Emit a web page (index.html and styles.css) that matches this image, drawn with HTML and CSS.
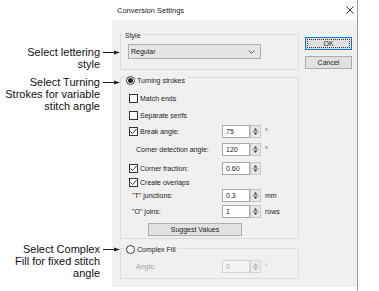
FILE: index.html
```html
<!DOCTYPE html>
<html lang="en">
<head>
    <meta charset="UTF-8">
    <meta name="viewport" content="width=device-width, initial-scale=1.0">
    <title>Conversion Settings</title>
    <link rel="stylesheet" href="styles.css">
</head>
<body>
    <div class="page">
        <div class="notes">
            <div class="note">
                <p>Select lettering<br>style</p>
                <svg class="arrow" width="17" height="5" viewBox="0 0 17 5"><path d="M0 2.5H13" stroke="#222"/><path d="M11 0.5L17 2.5L11 4.5Z" fill="#222"/></svg>
            </div>
            <div class="note note-turning">
                <p>Select Turning<br>Strokes for variable<br>stitch angle</p>
                <svg class="arrow" width="17" height="5" viewBox="0 0 17 5"><path d="M0 2.5H13" stroke="#222"/><path d="M11 0.5L17 2.5L11 4.5Z" fill="#222"/></svg>
            </div>
            <div class="note note-complex">
                <p>Select Complex<br>Fill for fixed stitch<br>angle</p>
                <svg class="arrow" width="17" height="5" viewBox="0 0 17 5"><path d="M0 2.5H13" stroke="#222"/><path d="M11 0.5L17 2.5L11 4.5Z" fill="#222"/></svg>
            </div>
        </div>

        <div class="dialog">
            <div class="titlebar">
                <span>Conversion Settings</span>
                <svg class="close" width="8" height="8" viewBox="0 0 8 8"><path d="M0.5 0.5L7.5 7.5M7.5 0.5L0.5 7.5" stroke="#333"/></svg>
            </div>
            <div class="dialog-body">
                <div class="groups">
                    <div class="group group-style">
                        <div class="legend">Style</div>
                        <div class="select">
                            <span>Regular</span>
                            <svg width="7" height="4" viewBox="0 0 7 4"><path d="M0.5 0.5L3.5 3.5L6.5 0.5" stroke="#666" fill="none"/></svg>
                        </div>
                    </div>

                    <div class="group group-turning">
                        <div class="legend"><span class="radio checked"></span>Turning strokes</div>
                        <div class="fields">
                            <div class="row"><span class="check"></span>Match ends</div>
                            <div class="row"><span class="check"></span>Separate serifs</div>
                            <div class="row">
                                <div class="label"><span class="check"><svg width="7" height="7" viewBox="0 0 7 7"><path d="M0.5 3.5L2.5 5.5L6.5 1" stroke="#333" fill="none"/></svg></span>Break angle:</div>
                                <div class="spin"><span class="spin-input">75</span><svg width="11" height="13" viewBox="0 0 11 13"><rect x="0.5" y="0.5" width="10" height="12" fill="#e6e6e6" stroke="#c8c8c8"/><path d="M3.5 5.5h4l-2-2.5z M3.5 7.5h4l-2 2.5z" fill="#444"/><path d="M2 6.5h7" stroke="#b0b0b0"/></svg></div>
                                <span class="unit">°</span>
                            </div>
                            <div class="row">
                                <div class="label indent">Corner detection angle:</div>
                                <div class="spin"><span class="spin-input">120</span><svg width="11" height="13" viewBox="0 0 11 13"><rect x="0.5" y="0.5" width="10" height="12" fill="#e6e6e6" stroke="#c8c8c8"/><path d="M3.5 5.5h4l-2-2.5z M3.5 7.5h4l-2 2.5z" fill="#444"/><path d="M2 6.5h7" stroke="#b0b0b0"/></svg></div>
                                <span class="unit">°</span>
                            </div>
                            <div class="row">
                                <div class="label"><span class="check"><svg width="7" height="7" viewBox="0 0 7 7"><path d="M0.5 3.5L2.5 5.5L6.5 1" stroke="#333" fill="none"/></svg></span>Corner fraction:</div>
                                <div class="spin"><span class="spin-input">0.60</span><svg width="11" height="13" viewBox="0 0 11 13"><rect x="0.5" y="0.5" width="10" height="12" fill="#e6e6e6" stroke="#c8c8c8"/><path d="M3.5 5.5h4l-2-2.5z M3.5 7.5h4l-2 2.5z" fill="#444"/><path d="M2 6.5h7" stroke="#b0b0b0"/></svg></div>
                            </div>
                            <div class="row"><span class="check"><svg width="7" height="7" viewBox="0 0 7 7"><path d="M0.5 3.5L2.5 5.5L6.5 1" stroke="#333" fill="none"/></svg></span>Create overlaps</div>
                            <div class="row">
                                <div class="label sub">"T" junctions:</div>
                                <div class="spin"><span class="spin-input">0.3</span><svg width="11" height="13" viewBox="0 0 11 13"><rect x="0.5" y="0.5" width="10" height="12" fill="#e6e6e6" stroke="#c8c8c8"/><path d="M3.5 5.5h4l-2-2.5z M3.5 7.5h4l-2 2.5z" fill="#444"/><path d="M2 6.5h7" stroke="#b0b0b0"/></svg></div>
                                <span class="unit">mm</span>
                            </div>
                            <div class="row">
                                <div class="label sub">"O" joins:</div>
                                <div class="spin"><span class="spin-input">1</span><svg width="11" height="13" viewBox="0 0 11 13"><rect x="0.5" y="0.5" width="10" height="12" fill="#e6e6e6" stroke="#c8c8c8"/><path d="M3.5 5.5h4l-2-2.5z M3.5 7.5h4l-2 2.5z" fill="#444"/><path d="M2 6.5h7" stroke="#b0b0b0"/></svg></div>
                                <span class="unit">rows</span>
                            </div>
                        </div>
                        <button class="btn btn-suggest">Suggest Values</button>
                    </div>

                    <div class="group group-complex">
                        <div class="legend"><span class="radio"></span>Complex Fill</div>
                        <div class="row row-angle disabled">
                            <div class="label indent">Angle:</div>
                            <div class="spin"><span class="spin-input">0</span><svg width="11" height="13" viewBox="0 0 11 13"><rect x="0.5" y="0.5" width="10" height="12" fill="#ececec" stroke="#d6d6d6"/><path d="M3.5 5.5h4l-2-2.5z M3.5 7.5h4l-2 2.5z" fill="#a8a8a8"/><path d="M2 6.5h7" stroke="#cfcfcf"/></svg></div>
                            <span class="unit">°</span>
                        </div>
                    </div>
                </div>

                <div class="buttons">
                    <button class="btn btn-default">OK</button>
                    <button class="btn">Cancel</button>
                </div>
            </div>
        </div>
    </div>
</body>
</html>
```

FILE: styles.css
```css
* {
    box-sizing: border-box;
}
body {
    margin: 0;
    background-color: #fff;
    font-family: "Liberation Sans", Arial, sans-serif;
}
.page {
    display: flex;
    width: 379px;
    height: 291px;
    overflow: hidden;
}

/* callouts on the left */
.notes {
    width: 112px;
    flex: none;
    padding-top: 46px;
    position: relative;
    z-index: 1;
}
.note {
    display: flex;
    align-items: flex-start;
    width: 120px;
}
.note p {
    margin: 0;
    width: 100px;
    text-align: right;
    font-size: 11px;
    line-height: 12px;
    color: #111;
}
.note .arrow {
    flex: none;
    margin: 4px 0 0 3px;
}
.note-turning {
    margin-top: 6px;
}
.note-complex {
    margin-top: 131px;
}

/* dialog */
.dialog {
    width: 246px;
    flex: none;
    border-right: 1px solid #9c9c9c;
    font-size: 7px;
    color: #222;
}
.titlebar {
    height: 20px;
    display: flex;
    align-items: center;
    justify-content: space-between;
    padding: 0 3px 0 5px;
    font-size: 7.5px;
    background-color: #fff;
}
.dialog-body {
    height: 267px;
    background-color: #f0f0f0;
    padding: 14px 0 0 8px;
    display: flex;
}
.groups {
    width: 179px;
    flex: none;
}
.group {
    border: 1px solid #dcdcdc;
}
.legend {
    display: flex;
    align-items: center;
    width: fit-content;
    height: 10px;
    padding: 0 2px;
    margin-left: 2px;
    background-color: #f0f0f0;
}
.group-style {
    height: 36px;
}
.group-style .legend {
    margin-top: -5px;
}
.select {
    width: 133px;
    height: 15px;
    margin: 4px 0 0 7px;
    padding: 0 5px 0 2px;
    display: flex;
    align-items: center;
    justify-content: space-between;
    background-color: #e5e5e5;
    border: 1px solid #adadad;
}

.group-turning {
    height: 162px;
    margin-top: 7px;
}
.group-turning .legend {
    margin-top: -3px;
    margin-left: 3px;
}
.fields {
    display: grid;
    grid-template-rows: 17px 16px 17px 19px 18px 11px 14px 19px;
    margin-top: 5px;
    padding-left: 8px;
}
.row {
    display: flex;
    align-items: center;
}
.label {
    width: 93px;
    flex: none;
    display: flex;
    align-items: center;
}
.label.indent {
    padding-left: 7px;
}
.label.sub {
    padding-left: 3px;
}
.check {
    width: 9px;
    height: 9px;
    flex: none;
    margin-right: 2px;
    border: 1px solid #333;
    background-color: #fff;
    display: flex;
    align-items: center;
    justify-content: center;
}
.radio {
    width: 9px;
    height: 9px;
    flex: none;
    margin-right: 2px;
    border: 1px solid #333;
    border-radius: 50%;
    background-color: #fff;
    display: flex;
    align-items: center;
    justify-content: center;
}
.radio.checked::after {
    content: "";
    width: 5px;
    height: 5px;
    border-radius: 50%;
    background-color: #222;
}
.spin {
    display: flex;
    flex: none;
}
.spin-input {
    width: 28px;
    height: 13px;
    padding-left: 3px;
    display: flex;
    align-items: center;
    background-color: #fff;
    border: 1px solid #a8a8a8;
}
.unit {
    margin-left: 4px;
}

.btn {
    height: 13px;
    padding: 0;
    font-family: inherit;
    font-size: 7px;
    color: #222;
    background-color: #e1e1e1;
    border: 1px solid #adadad;
}
.btn-suggest {
    display: block;
    width: 94px;
    margin: 2px 0 0 27px;
}

.group-complex {
    height: 31px;
    margin-top: 9px;
}
.group-complex .legend {
    margin-top: -5px;
    margin-left: 3px;
}
.row-angle {
    height: 14px;
    margin-top: 5px;
    padding-left: 8px;
}
.disabled {
    color: #a6a6a6;
}
.disabled .spin-input {
    background-color: #f4f4f4;
    border-color: #d0d0d0;
}

.buttons {
    display: flex;
    flex-direction: column;
    gap: 6px;
    margin-left: 6px;
    padding-top: 3px;
}
.buttons .btn {
    width: 47px;
}
.btn-default {
    border-color: #0078d7;
    outline: 1px dotted #333;
    outline-offset: -3px;
}
```
